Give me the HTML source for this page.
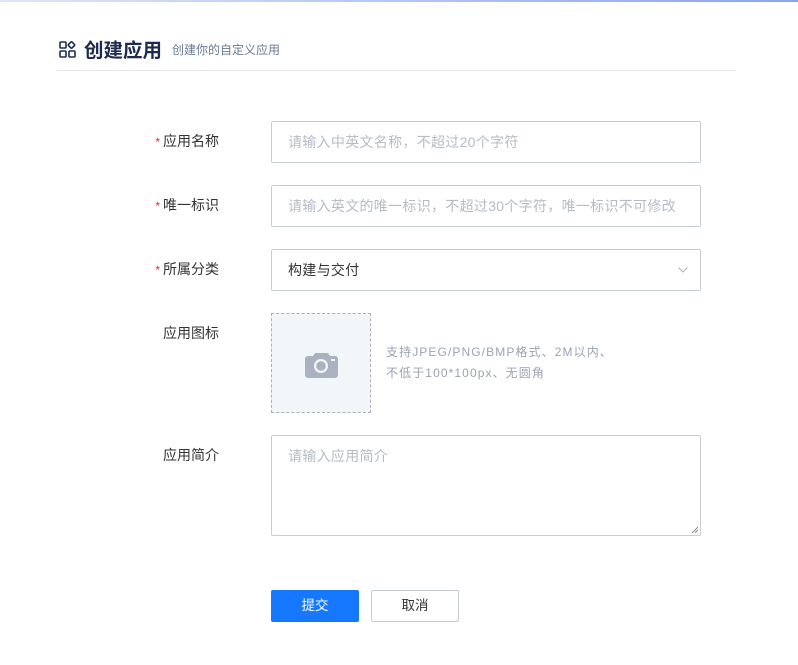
<!DOCTYPE html>
<html><head><meta charset="utf-8"><style>
*{box-sizing:border-box;margin:0;padding:0}
body{width:798px;height:665px;background:#fff;font-family:"Liberation Sans","Noto Sans CJK SC",sans-serif;position:relative;overflow:hidden;color:#333}
.topbar{position:absolute;left:0;top:0;width:798px;height:2px;background:linear-gradient(90deg,#dfe5f8,#8aa4ee)}
.title{position:absolute;left:58px;top:34px;font-size:19.5px;font-weight:bold;color:#1d2b4f;display:flex;align-items:center}
.title .sub{font-size:12px;font-weight:normal;color:#6a7a94;margin-left:10px;margin-top:2px}
.hr{position:absolute;left:56px;top:70px;width:680px;height:1px;background:#e6e8ee}
.lab{position:absolute;font-size:14px;color:#333;text-align:right;width:80px;left:139px}
.lab i{color:#f5222d;font-style:normal;margin-right:3px;font-size:12px}
.inp{position:absolute;left:271px;width:430px;height:42px;border:1px solid #c8cdd5;border-radius:2px;font-size:14px;letter-spacing:0.3px;color:#b6bcc6;padding:10px 16px}
.up{position:absolute;left:271px;top:313px;width:100px;height:100px;border:1px dashed #a9b0bc;background:#f3f6f9}
.tip{position:absolute;left:386px;top:342px;font-size:12px;letter-spacing:1.1px;color:#9aa3b1;line-height:21px}
.btn{position:absolute;top:590px;width:88px;height:32px;font-size:13.5px;text-align:center;line-height:30px;border-radius:2px}
</style></head><body>
<div class="topbar"></div>
<div class="title"><svg width="20" height="20" viewBox="0 0 20 20" style="margin-right:6px" fill="none" stroke="#1d2b4f" stroke-width="1.6"><rect x="2" y="3" width="6" height="6" rx="1"/><rect x="2" y="12" width="6" height="6" rx="1"/><rect x="11" y="12" width="6" height="6" rx="1"/><rect x="11" y="3.5" width="5" height="5" rx="1" transform="rotate(45 13.5 6)"/></svg>创建应用<span class="sub">创建你的自定义应用</span></div>
<div class="hr"></div>
<div class="lab" style="top:131px"><i>*</i>应用名称</div>
<div class="inp" style="top:121px">请输入中英文名称，不超过20个字符</div>
<div class="lab" style="top:195px"><i>*</i>唯一标识</div>
<div class="inp" style="top:185px">请输入英文的唯一标识，不超过30个字符，唯一标识不可修改</div>
<div class="lab" style="top:259px"><i>*</i>所属分类</div>
<div class="inp" style="top:249px;color:#333">构建与交付<svg style="position:absolute;right:12px;top:17px" width="10" height="6" viewBox="0 0 10 6" fill="none" stroke="#aab1bc" stroke-width="1"><path d="M0.5 0.5L5 5L9.5 0.5"/></svg></div>
<div class="lab" style="top:323px">应用图标</div>
<div class="up"><svg style="position:absolute;left:33px;top:37px" width="33" height="27" viewBox="0 0 33 27"><path fill="#a9b2be" d="M10 2h13l2 3h5a3 3 0 0 1 3 3v16a3 3 0 0 1-3 3H3a3 3 0 0 1-3-3V8a3 3 0 0 1 3-3h5z"/><circle cx="16" cy="15" r="7" fill="#f3f6f9"/><circle cx="16" cy="15" r="4.8" fill="#a9b2be"/><rect x="26" y="8" width="4" height="2" fill="#f3f6f9"/></svg></div>
<div class="tip">支持JPEG/PNG/BMP格式、2M以内、<br>不低于100*100px、无圆角</div>
<div class="lab" style="top:445px">应用简介</div>
<div class="inp" style="top:435px;height:101px">请输入应用简介<svg style="position:absolute;right:2px;bottom:2px" width="7" height="7" viewBox="0 0 7 7" stroke="#888" stroke-width="1"><path d="M1 7L7 1M4 7L7 4"/></svg></div>
<div class="btn" style="left:271px;background:#1677ff;color:#fff;border:1px solid #1677ff">提交</div>
<div class="btn" style="left:371px;border:1px solid #c8cdd5;color:#333">取消</div>
</body></html>
